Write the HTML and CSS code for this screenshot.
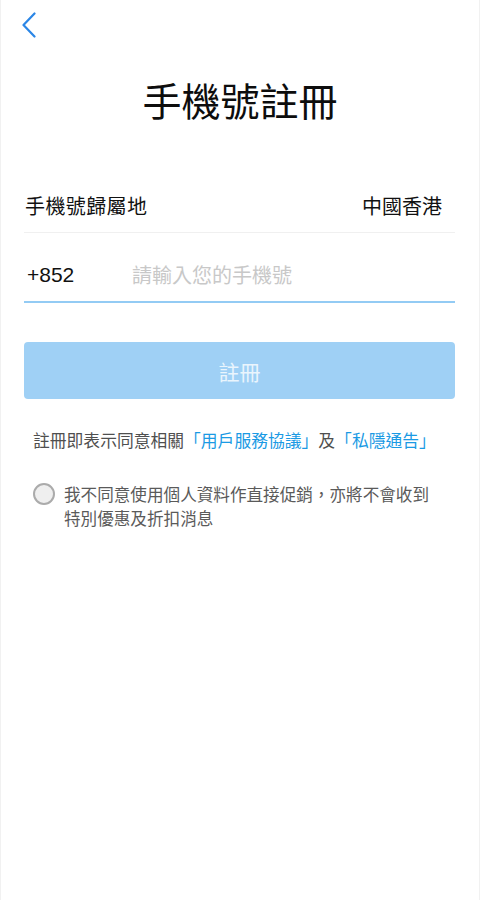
FILE: index.html
```html
<!DOCTYPE html>
<html lang="zh-Hant">
<head>
<meta charset="utf-8">
<title>手機號註冊</title>
<link rel="stylesheet" href="styles.css">
</head>
<body>
<div class="page">
  <header class="topbar">
    <a class="back" href="#" aria-label="返回">
      <svg width="16" height="26" viewBox="0 0 16 26"><path d="M13.5 1.5 L2.5 13 L13.5 24.5" fill="none" stroke="#2b86e6" stroke-width="2.2" stroke-linecap="round" stroke-linejoin="round"/></svg>
    </a>
  </header>
  <h1 class="title">手機號註冊</h1>
  <div class="form">
    <div class="row region">
      <span class="label">手機號歸屬地</span>
      <span class="value">中國香港</span>
    </div>
    <div class="row phone">
      <span class="code">+852</span>
      <span class="placeholder">請輸入您的手機號</span>
    </div>
    <button class="submit" type="button">註冊</button>
    <p class="agree">註冊即表示同意相關<a href="#">「用戶服務協議」</a>及<a href="#">「私隱通告」</a></p>
    <label class="optout">
      <span class="radio"></span>
      <span class="optout-text">我不同意使用個人資料作直接促銷，亦將不會收到特別優惠及折扣消息</span>
    </label>
  </div>
</div>
</body>
</html>
```

FILE: styles.css
```css
* { box-sizing: border-box; }
html, body { margin: 0; padding: 0; background: #fff; }
body {
  font-family: "Noto Sans CJK TC", "Noto Sans", sans-serif;
  color: #1a1a1a;
}
.page {
  min-height: 900px;
  border-left: 1px solid #f1f1f1;
  border-right: 1px solid #f1f1f1;
}
.topbar {
  height: 50px;
  padding: 12px 0 0 20px;
}
.back { display: inline-block; width: 16px; height: 26px; }
.back svg { display: block; }
.title {
  margin: 26px 0 0;
  font-size: 39px;
  line-height: 46px;
  font-weight: 400;
  text-align: center;
  color: #0d0d0d;
}
.form {
  margin-top: 58px;
  padding: 0 24px 0 23px;
}
.row { display: flex; align-items: center; }
.region {
  height: 53px;
  justify-content: space-between;
  font-size: 20px;
  line-height: 24px;
  color: #111;
  border-bottom: 1px solid #f0f0f0;
  padding: 0 13px 0 1px;
}
.label { letter-spacing: 0.4px; }
.phone {
  padding: 30px 0 14px 3px;
  border-bottom: 2px solid #93cbf4;
  line-height: 24px;
}
.code {
  font-family: "Liberation Sans", Arial, sans-serif;
  font-size: 21px;
  color: #111;
  width: 105px;
}
.placeholder {
  font-size: 20px;
  color: #c8c8c8;
}
.submit {
  display: block;
  width: 100%;
  height: 57px;
  margin-top: 39px;
  border: 0;
  border-radius: 4px;
  background: #9fd0f5;
  color: #eaf5fd;
  font-family: inherit;
  font-size: 21px;
  padding: 0;
}
.agree {
  margin: 29px 0 0;
  padding-left: 9px;
  font-size: 16.8px;
  line-height: 24px;
  color: #4f4f4f;
  white-space: nowrap;
}
.agree a { color: #1a9ae4; text-decoration: none; }
.optout {
  display: flex;
  align-items: flex-start;
  margin-top: 30px;
  padding-left: 9px;
}
.radio {
  flex: none;
  width: 22px;
  height: 22px;
  margin-top: 1px;
  border: 2px solid #ababab;
  border-radius: 50%;
  background: #efefef;
}
.optout-text {
  margin-left: 9px;
  font-size: 16.6px;
  line-height: 24px;
  color: #5a5a5a;
  width: 372px;
}
```
